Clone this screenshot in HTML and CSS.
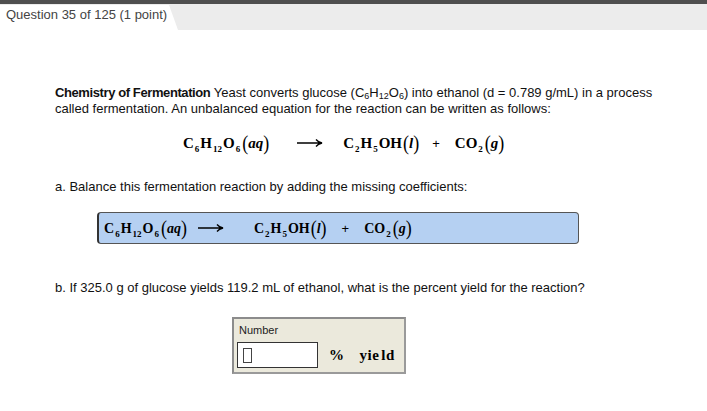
FILE: index.html
```html
<!DOCTYPE html>
<html>
<head>
<meta charset="utf-8">
<link rel="stylesheet" href="styles.css">
</head>
<body>
<div class="topbar"></div>
<div class="tabstrip"><div class="tab">Question 35 of 125 (1 point)</div></div>
<div class="content">
  <p class="intro"><b class="title">Chemistry of Fermentation</b> Yeast converts glucose (C<sub>6</sub>H<sub>12</sub>O<sub>6</sub>) into ethanol (d = 0.789 g/mL) in a process called fermentation. An unbalanced equation for the reaction can be written as follows:</p>

  <div class="eq eq1">
    <span class="sp">C<sub>6</sub>H<sub>12</sub>O<sub>6</sub><span class="ph"><span class="par">(</span><i>aq</i><span class="par">)</span></span></span>
    <svg class="arrow" width="26" height="10" viewBox="0 0 26 10"><path d="M0 5H24M19 1.5Q21 4 25 5Q21 6 19 8.5" fill="none" stroke="#000" stroke-width="1.3"/></svg>
    <span class="sp">C<sub>2</sub>H<sub>5</sub>OH<span class="ph"><span class="par">(</span><i>l</i><span class="par">)</span></span></span>
    <span class="plus">+</span>
    <span class="sp">CO<sub>2</sub><span class="ph"><span class="par">(</span><i>g</i><span class="par">)</span></span></span>
  </div>

  <p class="q qa">a. Balance this fermentation reaction by adding the missing coefficients:</p>

  <div class="answer">
    <div class="eq eq2">
      <span class="sp">C<sub>6</sub>H<sub>12</sub>O<sub>6</sub><span class="ph"><span class="par">(</span><i>aq</i><span class="par">)</span></span></span>
      <svg class="arrow" width="26" height="10" viewBox="0 0 26 10"><path d="M0 5H24M19 1.5Q21 4 25 5Q21 6 19 8.5" fill="none" stroke="#000" stroke-width="1.3"/></svg>
      <span class="sp">C<sub>2</sub>H<sub>5</sub>OH<span class="ph"><span class="par">(</span><i>l</i><span class="par">)</span></span></span>
      <span class="plus">+</span>
      <span class="sp">CO<sub>2</sub><span class="ph"><span class="par">(</span><i>g</i><span class="par">)</span></span></span>
    </div>
  </div>

  <p class="q qb">b. If 325.0 g of glucose yields 119.2 mL of ethanol, what is the percent yield for the reaction?</p>

  <div class="numbox">
    <div class="numlabel">Number</div>
    <div class="numrow">
      <div class="input"><span class="caret"></span></div>
      <span class="unit">%</span>
      <span class="unit">yie<span class="gap">l</span>d</span>
    </div>
  </div>
</div>
</body>
</html>
```
FILE: styles.css
```css
html, body {
  margin: 0;
  padding: 0;
  background: #fff;
  font-family: "Liberation Sans", Arial, sans-serif;
  color: #000;
}

.topbar {
  height: 4px;
  background: #4f4f4f;
}

.tabstrip {
  height: 26px;
  background: #ececec;
  display: flex;
  align-items: flex-end;
}

.tab {
  height: 25px;
  width: 178px;
  padding-left: 6px;
  box-sizing: border-box;
  background: #fff;
  clip-path: polygon(0 0, 169px 0, 178px 100%, 0 100%);
  font-size: 13px;
  color: #444;
  line-height: 20px;
}

.content {
  padding-left: 55px;
}

.intro {
  margin: 55px 0 0;
  width: 605px;
  font-size: 13px;
  line-height: 16px;
  color: #111;
}

.intro sub {
  font-size: 9px;
  line-height: 0;
  vertical-align: -2px;
}

.title {
  letter-spacing: -0.4px;
}

.eq {
  display: flex;
  align-items: center;
  font-family: "Liberation Serif", "Times New Roman", serif;
  font-weight: bold;
  font-size: 15px;
  color: #000;
}

.eq1 {
  margin: 15px 0 0 128px;
  height: 22px;
}

.eq sub {
  font-size: 9px;
  line-height: 0;
  vertical-align: -4px;
  padding: 0 1px 0 1px;
}

.sp {
  white-space: nowrap;
}

.ph {
  margin-left: 1px;
}

.par {
  display: inline-block;
  font-weight: normal;
  font-size: 18px;
  transform: scaleY(1.15);
  vertical-align: -1px;
}

.ph i {
  font-weight: bold;
}

.eq1 .arrow {
  margin: 0 20px 0 28px;
}

.plus {
  font-weight: normal;
  font-family: "Liberation Sans", Arial, sans-serif;
  font-size: 13px;
}

.eq1 .plus {
  margin: 0 15px 0 13px;
}

.q {
  font-size: 13px;
  line-height: 16px;
  color: #111;
  margin: 0;
}

.qa {
  margin-top: 25px;
}

.answer {
  margin: 17px 0 0 42px;
  width: 482px;
  height: 32px;
  box-sizing: border-box;
  border: 1px solid #555;
  border-left: 2px solid #333;
  border-radius: 4px;
  background: #b5d0f2;
  display: flex;
  align-items: center;
  padding-left: 5px;
}

.eq2 {
  font-size: 14px;
}

.eq2 .arrow {
  margin: 0 30px 0 11px;
}

.eq2 .plus {
  margin: 0 15px 0 15px;
}

.qb {
  margin-top: 36px;
}

.numbox {
  margin: 21px 0 0 177px;
  width: 174px;
  height: 57px;
  box-sizing: border-box;
  border: 2px solid #8c8c8c;
  border-right-color: #9a9a9a;
  border-bottom-color: #9a9a9a;
  background: #ebe9dc;
  padding: 4px 0 0 3px;
}

.numlabel {
  font-size: 11px;
  line-height: 14px;
  color: #222;
  margin-left: 2px;
}

.numrow {
  display: flex;
  align-items: center;
  margin-top: 5px;
}

.input {
  width: 81px;
  height: 26px;
  box-sizing: border-box;
  background: #fff;
  border: 1px solid #333;
  display: flex;
  align-items: center;
  padding-left: 5px;
}

.caret {
  width: 9px;
  height: 15px;
  border: 1px solid #444;
  box-sizing: border-box;
}

.unit {
  font-family: "Liberation Serif", "Times New Roman", serif;
  font-weight: bold;
  font-size: 15px;
  margin-left: 11px;
  letter-spacing: 0.5px;
}

.unit + .unit {
  margin-left: 15px;
}

.gap {
  margin-left: 2px;
}
```
